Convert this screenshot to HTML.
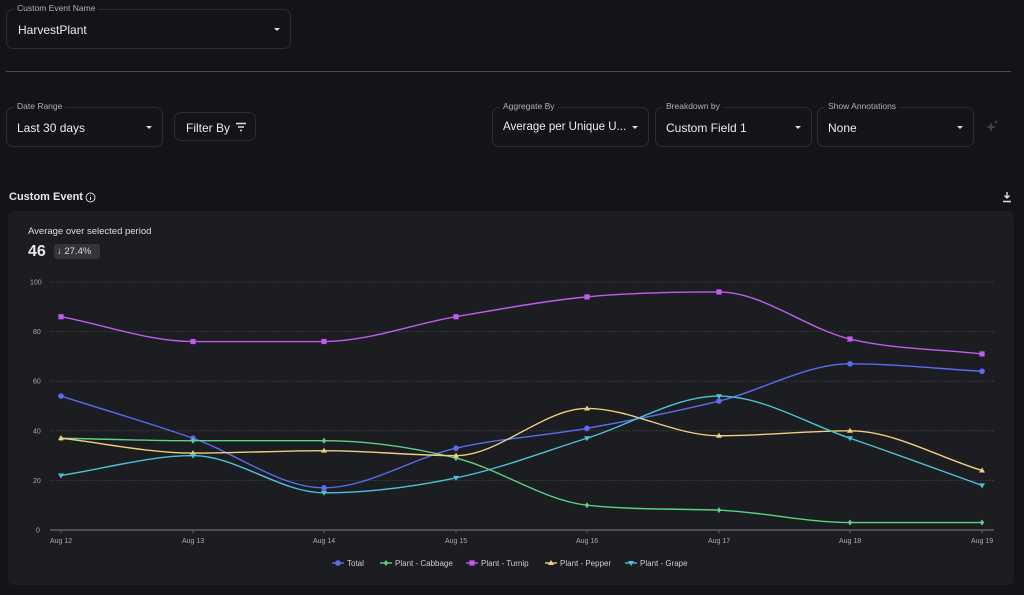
<!DOCTYPE html>
<html><head><meta charset="utf-8"><style>
*{box-sizing:border-box;margin:0;padding:0}
body{width:1024px;height:595px;background:#131418;font-family:"Liberation Sans",sans-serif;color:#e8e8ea;position:relative;overflow:hidden}
.f{position:absolute;border:1px solid #2c2d33;border-radius:7px;height:40px}
.f .lab{position:absolute;top:-7px;left:7px;background:#131418;padding:0 3px;font-size:8.5px;color:#b0b1b7}
.f .val{position:absolute;left:10px;top:13px;font-size:12px;color:#ececee;white-space:nowrap}
.f .ar{position:absolute;right:10px;top:18px;width:0;height:0;border-left:3px solid transparent;border-right:3px solid transparent;border-top:3.5px solid #ddd}
.card{position:absolute;left:8px;top:211px;width:1006px;height:374px;background:#1c1d21;border-radius:6px}
</style></head><body>
<div class="f" style="left:6px;top:9px;width:285px;height:40px"><span class="lab">Custom Event Name</span><span class="val" style="left:11px;top:13px">HarvestPlant</span><span class="ar"></span></div>
<div style="position:absolute;left:6px;top:71px;width:1005px;height:1px;background:#4a4b50"></div>
<div class="f" style="left:6px;top:107px;width:157px"><span class="lab">Date Range</span><span class="val">Last 30 days</span><span class="ar"></span></div>
<div class="f" style="left:174px;top:112px;width:82px;height:29px"><span class="val" style="top:8px;left:11px">Filter By</span>
<svg style="position:absolute;left:60px;top:9px" width="12" height="10"><path d="M1 1.5h10M3 5h6M5 8.5h2" stroke="#ddd" stroke-width="1.4"/></svg></div>
<div class="f" style="left:492px;top:107px;width:157px"><span class="lab">Aggregate By</span><span class="val" style="font-size:11.5px">Average per Unique U...</span><span class="ar"></span></div>
<div class="f" style="left:655px;top:107px;width:157px"><span class="lab">Breakdown by</span><span class="val">Custom Field 1</span><span class="ar"></span></div>
<div class="f" style="left:817px;top:107px;width:157px"><span class="lab">Show Annotations</span><span class="val">None</span><span class="ar"></span></div>
<svg style="position:absolute;left:984px;top:119px" width="16" height="16"><path d="M7 3l1.3 3.7L12 8l-3.7 1.3L7 13l-1.3-3.7L2 8l3.7-1.3z" fill="#444"/><path d="M12 1l.6 1.4L14 3l-1.4.6L12 5l-.6-1.4L10 3l1.4-.6z" fill="#444"/></svg>
<div style="position:absolute;left:9px;top:191px;font-size:11px;font-weight:bold">Custom Event</div>
<svg style="position:absolute;left:85px;top:192px" width="11" height="11"><circle cx="5.5" cy="5.5" r="4.5" fill="none" stroke="#ddd" stroke-width="1"/><path d="M5.5 5v3M5.5 3.2v.8" stroke="#ddd" stroke-width="1"/></svg>
<svg style="position:absolute;left:1001px;top:191px" width="12" height="12"><path d="M6 1v6M3.5 4.5L6 7l2.5-2.5M2 10.5h8" stroke="#ddd" stroke-width="1.4" fill="none"/></svg>
<div class="card"></div>
<div style="position:absolute;left:28px;top:226px;font-size:9.5px;color:#ddd">Average over selected period</div>
<div style="position:absolute;left:28px;top:243px;font-size:16px;font-weight:bold">46</div>
<div style="position:absolute;left:54px;top:244px;width:46px;height:15px;background:#34353a;border-radius:3px;font-size:9.5px;color:#ddd;padding:2px 0 0 3px">↓ 27.4%</div>
<svg id="ch" style="position:absolute;left:0;top:0" width="1024" height="595" font-family="Liberation Sans" font-size="7" fill="#aaa"></svg>
<script>
var s=document.getElementById('ch'),h='';
function Y(v){return 530-v*2.48}
var X=[61,193,324,456,587,719,850,982];
[0,20,40,60,80,100].forEach(function(v){
 if(v>0)h+='<line x1="50" x2="994" y1="'+Y(v)+'" y2="'+Y(v)+'" stroke="#45464b" stroke-dasharray="1.5 1.5" stroke-width="0.8"/>';
 h+='<text x="'+(v==0?36:v==100?30:33)+'" y="'+(Y(v)+2.5)+'">'+v+'</text>';});
h+='<line x1="50" x2="994" y1="530" y2="530" stroke="#6a6b70" stroke-width="1.2"/>';
X.forEach(function(x,i){h+='<line x1="'+x+'" x2="'+x+'" y1="530" y2="533" stroke="#666"/><text x="'+(x-11)+'" y="543">Aug '+(12+i)+'</text>';});
var D=[['#5a6cf0',[54,37,17,33,41,52,67,64],'c'],['#5ed188',[37,36,36,29,10,8,3,3],'d'],['#c05cf0',[86,76,76,86,94,96,77,71],'s'],['#efcf7e',[37,31,32,30,49,38,40,24],'t'],['#4cc2d8',[22,30,15,21,37,54,37,18],'v']];
function mono(ys){var n=ys.length,d=[],m=[];for(var i=0;i<n-1;i++)d.push((ys[i+1]-ys[i])/(X[i+1]-X[i]));
m[0]=d[0];m[n-1]=d[n-2];for(i=1;i<n-1;i++){m[i]=(d[i-1]*d[i]<=0)?0:(d[i-1]+d[i])/2;}
for(i=0;i<n-1;i++){if(d[i]==0){m[i]=0;m[i+1]=0;continue}var a=m[i]/d[i],b=m[i+1]/d[i],t=a*a+b*b;if(t>9){var k=3/Math.sqrt(t);m[i]=k*a*d[i];m[i+1]=k*b*d[i];}}
var p='M'+X[0]+' '+ys[0];for(i=0;i<n-1;i++){var dx=(X[i+1]-X[i])/3;p+='C'+(X[i]+dx)+' '+(ys[i]+m[i]*dx)+' '+(X[i+1]-dx)+' '+(ys[i+1]-m[i+1]*dx)+' '+X[i+1]+' '+ys[i+1];}return p;}
function mk(t,x,y,c){if(t=='c')return '<circle cx="'+x+'" cy="'+y+'" r="2.8" fill="'+c+'"/>';if(t=='s')return '<rect x="'+(x-2.6)+'" y="'+(y-2.6)+'" width="5.2" height="5.2" fill="'+c+'"/>';
if(t=='d')return '<path d="M'+x+' '+(y-3)+'l2.2 3-2.2 3-2.2-3z" fill="'+c+'"/>';if(t=='t')return '<path d="M'+x+' '+(y-3)+'l3 5h-6z" fill="'+c+'"/>';return '<path d="M'+x+' '+(y+3)+'l3-5h-6z" fill="'+c+'"/>';}
D.forEach(function(s_){var ys=s_[1].map(Y);h+='<path d="'+mono(ys)+'" fill="none" stroke="'+s_[0]+'" stroke-width="1.4"/>';ys.forEach(function(y,i){h+=mk(s_[2],X[i],y,s_[0]);});});
var L=[['Total',332],['Plant - Cabbage',380],['Plant - Turnip',466],['Plant - Pepper',545],['Plant - Grape',625]];
L.forEach(function(l,i){var c=D[i][0];h+='<line x1="'+l[1]+'" x2="'+(l[1]+12)+'" y1="563" y2="563" stroke="'+c+'" stroke-width="1.4"/>'+mk(D[i][2],l[1]+6,563,c)+'<text x="'+(l[1]+15)+'" y="566" font-size="8" fill="#ccc">'+l[0]+'</text>';});
s.innerHTML=h;
</script>
</body></html>
